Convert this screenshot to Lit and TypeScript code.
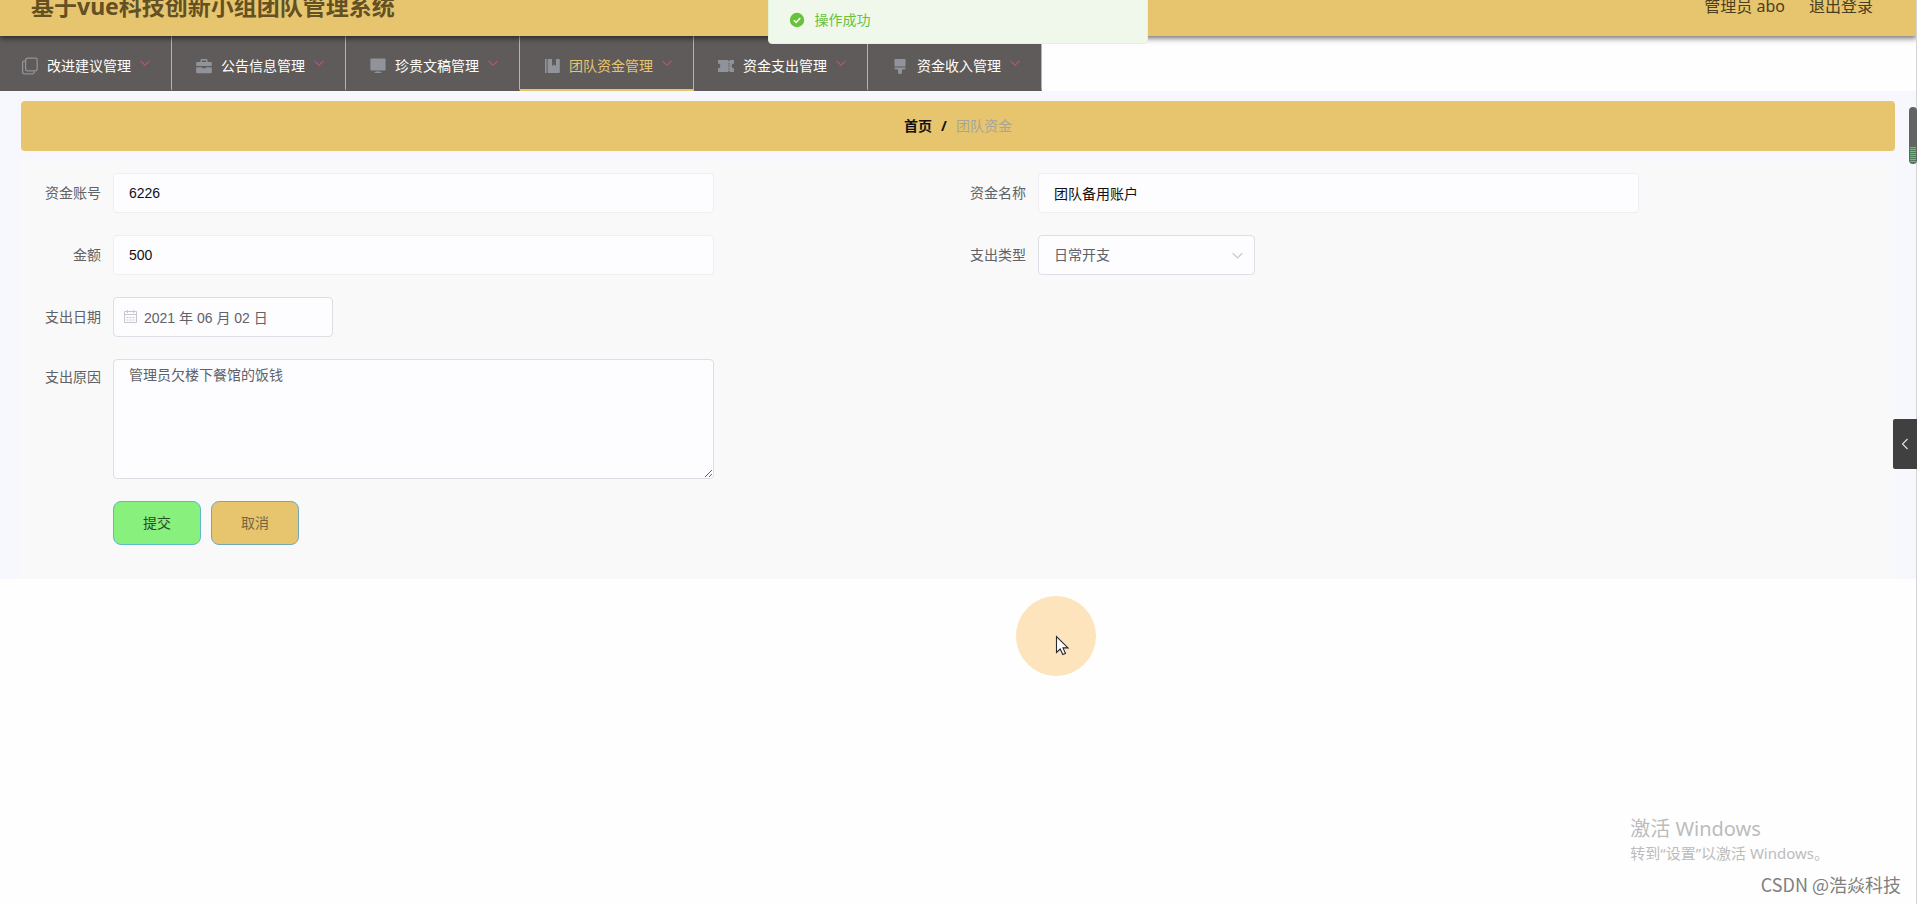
import { LitElement, html, css, svg, TemplateResult } from "lit";
import { customElement, state } from "lit/decorators.js";
import { classMap } from "lit/directives/class-map.js";

interface NavItem {
  label: string;
  icon: TemplateResult;
}

const copyIcon = svg`<g fill="none" stroke="currentColor" stroke-width="1.3"><rect x="4.6" y="1.2" width="11.6" height="12.6" rx="2"/><path d="M4.4 4.2H3.2a1.6 1.6 0 0 0-1.6 1.6v9.4a1.6 1.6 0 0 0 1.6 1.6h8.4a1.6 1.6 0 0 0 1.6-1.6v-1"/></g>`;
const caseIcon = svg`<path fill="currentColor" fill-rule="evenodd" d="M5.5 5V3a1 1 0 0 1 1-1h5a1 1 0 0 1 1 1v2H16a.8.8 0 0 1 .8.8V9H1.200V5.800A.8.8 0 0 1 2 5zM7 5h4V3.500H7zM1.200 10.200H7v1h4v-1h5.800V15.500a.8.8 0 0 1-.8.8H2a.8.8 0 0 1-.8-.8z"/>`;
const screenIcon = svg`<path fill="currentColor" d="M2.200 1.500h13.600a.8.8 0 0 1 .8.800v10.400a.8.8 0 0 1-.8.800H2.200a.8.8 0 0 1-.8-.800V2.300a.8.8 0 0 1 .8-.800zM7 14.500h4l2 1.600H5z"/>`;
const bookIcon = svg`<path fill="currentColor" d="M2 2h1.600v14H2zM4.600 2H9v7l2-1.500L13 9V2h3a.8.8 0 0 1 .8.800v12.400a.8.8 0 0 1-.8.800H4.600z"/>`;
const ticketIcon = svg`<path fill="currentColor" fill-rule="evenodd" d="M1 3h10l1 1.400L13 3h4v3.600a2.400 2.400 0 0 0 0 4.800V15h-4l-1-1.400L11 15H1v-3.600a2.400 2.400 0 0 0 0-4.800zM11.500 6v1.700h1V6zM11.500 8.500v1.600h1V8.500zM11.500 11v1.600h1V11z"/>`;
const brushIcon = svg`<path fill="currentColor" d="M3.500 2h11v7.500h-11zM3.500 10.500h11v.8a1.200 1.200 0 0 1-1.200 1.200H11v3a1.600 1.600 0 0 1-1.600 1.600h-.8A1.600 1.600 0 0 1 7 15.500v-3H4.700a1.200 1.200 0 0 1-1.200-1.200z"/>`;

const NAV: NavItem[] = [
  { label: "改进建议管理", icon: copyIcon },
  { label: "公告信息管理", icon: caseIcon },
  { label: "珍贵文稿管理", icon: screenIcon },
  { label: "团队资金管理", icon: bookIcon },
  { label: "资金支出管理", icon: ticketIcon },
  { label: "资金收入管理", icon: brushIcon },
];

@customElement("app-root")
export class AppRoot extends LitElement {
  @state() private active = 3;

  static styles = css`
    :host {
      display: block;
      position: relative;
      min-height: 100vh;
      overflow: hidden;
      background: #fefefe;
      color: #606266;
      font: 14px/20px "Noto Sans", "Noto Sans CJK SC", sans-serif;
    }
    *, *::before, *::after { box-sizing: border-box; }
    a { color: inherit; text-decoration: none; }
    button, input, select, textarea { font: inherit; color: inherit; margin: 0; }

    .header {
      position: relative;
      z-index: 1;
      display: flex;
      align-items: center;
      justify-content: space-between;
      height: 60px;
      margin-top: -24px;
      padding: 0 44px 0 31px;
      background: #e7c56f;
      box-shadow: 0 2px 6px rgba(0, 0, 0, 0.6);
      color: #4a3e20;
    }
    .title { margin: 0; font-size: 23px; line-height: 32px; font-weight: 700; color: #635023; }
    .account { display: flex; gap: 24px; font-size: 16px; line-height: 24px; }

    .nav { display: flex; height: 55px; }
    .nav-item {
      display: flex;
      align-items: center;
      height: 55px;
      padding: 6px 20px 0 20px;
      border: 0;
      border-right: 1px solid #b5b3b3;
      border-bottom: 2px solid #5e5b5a;
      background: #5e5b5a;
      color: #fff;
      cursor: pointer;
      white-space: nowrap;
    }
    .nav-item:first-child { padding-left: 18px; }
    .nav-item.active { color: #e7c56f; border-bottom-color: #e7c56f; }
    .nav-icon { width: 18px; height: 18px; margin: 0 8px 0 3px; color: #909399; }
    .nav-arrow { width: 12px; height: 12px; margin-left: 8px; margin-bottom: 5px; color: #c24f8c; }

    .main { padding: 10px 22px 0 21px; background: #f6f8fd; }
    .crumbs {
      display: flex;
      align-items: center;
      justify-content: center;
      gap: 9px;
      height: 50px;
      border-radius: 4px;
      background: #e7c56f;
      color: #a5a59c;
    }
    .crumbs .home, .crumbs .slash { font-weight: 700; color: #111; }

    .form {
      display: grid;
      grid-template-columns: 1fr 1fr;
      row-gap: 22px;
      margin-top: 10px;
      padding: 12px 12px 34px;
      background: #f9f9f9;
    }
    .field { display: flex; align-items: flex-start; }
    .field.start { grid-column: 1; }
    .label { flex: none; width: 80px; padding-right: 12px; text-align: right; line-height: 40px; }
    .label.area { line-height: 36px; }
    .control {
      display: block;
      width: 100%;
      height: 40px;
      padding: 0 15px;
      border: 1px solid #dcdfe6;
      border-radius: 4px;
      outline: 0;
      background: #fdfcff;
      font-family: "Liberation Sans", "Noto Sans CJK SC", sans-serif;
    }
    .wrap { position: relative; flex: 0 1 601px; }
    .wrap.date { flex-basis: 220px; }
    .wrap.pick { flex-basis: 217px; }
    .control.soft { border-color: #efeff2; color: #111; }
    .control.dated { padding-left: 30px; }
    select.control { appearance: none; }
    textarea.control { height: 120px; padding: 5px 15px; line-height: 21px; resize: vertical; }
    .calendar { position: absolute; left: 10px; top: 12px; width: 15px; height: 15px; color: #c4c7cf; pointer-events: none; }
    .caret { position: absolute; right: 11px; top: 14px; width: 13px; height: 13px; color: #c4c7cf; pointer-events: none; }

    .actions { grid-column: 1; display: flex; gap: 10px; padding-left: 80px; }
    .btn {
      width: 88px;
      height: 44px;
      padding: 0;
      border: 1px solid #72a9ba;
      border-radius: 8px;
      background: #e7c56f;
      color: #75653e;
      cursor: pointer;
    }
    .btn.primary { background: #88f07c; border-color: #5fb9cc; color: #2c4a2a; }

    .toast {
      position: absolute;
      z-index: 2;
      top: -4px;
      left: calc(50% - 191px);
      display: flex;
      align-items: center;
      gap: 10px;
      width: 380px;
      height: 48px;
      padding: 0 20px;
      border: 1px solid #e1f3d8;
      border-radius: 4px;
      background: #f0f7eb;
      color: #67c23a;
    }
    .toast svg { width: 16px; height: 16px; }

    .edge { position: absolute; z-index: 1; top: 0; right: 0; bottom: 0; width: 1px; background: #d5d5d8; }
    .thumb {
      position: absolute;
      z-index: 2;
      top: 107px;
      right: 0;
      display: flex;
      align-items: flex-end;
      width: 8px;
      height: 57px;
      padding: 1px;
      border-radius: 4px;
      background: #626463;
    }
    .level {
      width: 100%;
      height: 16px;
      border-radius: 0 0 3px 3px;
      background: repeating-linear-gradient(#5cc878 0 1px, #4b7d57 1px 2px);
    }
    .drawer {
      position: absolute;
      z-index: 2;
      top: 419px;
      right: 0;
      display: flex;
      align-items: center;
      justify-content: center;
      width: 24px;
      height: 50px;
      padding: 0;
      border: 0;
      border-radius: 2px 0 0 2px;
      background: #3f403f;
      color: #ddd;
    }
    .drawer svg { width: 8px; height: 12px; }
    .pointer { position: absolute; left: 1016px; top: 596px; width: 80px; height: 80px; }
    .activate { position: absolute; right: 88px; bottom: 40px; color: #bcbcbc; font-size: 15px; line-height: 22px; }
    .activate strong { display: block; font-size: 20px; line-height: 26px; font-weight: 400; }
    .credit { position: absolute; right: 16px; bottom: 7px; color: #808080; font-size: 18px; line-height: 26px; font-family: "Noto Sans CJK SC", sans-serif; }
  `;

  private chevron(cls: string) {
    return html`<svg class=${cls} viewBox="0 0 12 12" fill="none" stroke="currentColor" stroke-width="1.1" aria-hidden="true"><path d="M1.500 3.800 6 8.300l4.500-4.500" /></svg>`;
  }

  render() {
    return html`
      <header class="header">
        <h1 class="title">基于vue科技创新小组团队管理系统</h1>
        <div class="account"><span>管理员 abo</span><a href="#logout">退出登录</a></div>
      </header>

      <nav class="nav">
        ${NAV.map(
          (item, i) => html`<button
            type="button"
            class=${classMap({ "nav-item": true, active: i === this.active })}
            @click=${() => (this.active = i)}
          ><svg class="nav-icon" viewBox="0 0 18 18" aria-hidden="true">${item.icon}</svg><span>${item.label}</span>${this.chevron("nav-arrow")}</button>`
        )}
      </nav>

      <main class="main">
        <div class="crumbs"><a class="home" href="#home">首页</a><span class="slash">/</span><span>团队资金</span></div>
        <form class="form" @submit=${(e: Event) => e.preventDefault()}>
          <div class="field">
            <label class="label" for="account">资金账号</label>
            <div class="wrap"><input class="control soft" id="account" type="text" value="6226" /></div>
          </div>
          <div class="field">
            <label class="label" for="name">资金名称</label>
            <div class="wrap"><input class="control soft" id="name" type="text" value="团队备用账户" /></div>
          </div>
          <div class="field">
            <label class="label" for="amount">金额</label>
            <div class="wrap"><input class="control soft" id="amount" type="text" value="500" /></div>
          </div>
          <div class="field">
            <label class="label" for="kind">支出类型</label>
            <div class="wrap pick">
              <select class="control" id="kind"><option>日常开支</option></select>
              ${this.chevron("caret")}
            </div>
          </div>
          <div class="field start">
            <label class="label" for="date">支出日期</label>
            <div class="wrap date">
              <input class="control dated" id="date" type="text" value="2021 年 06 月 02 日" />
              <svg class="calendar" viewBox="0 0 15 15" fill="none" stroke="currentColor" aria-hidden="true">
                <path d="M1.500 2.500h12v11h-12zM1.500 5.500h12M4.500 1v3M10.500 1v3" />
                <path d="M3.500 8.500h2m1 0h2m1 0h2M3.500 11h2m1 0h2m1 0h2" />
              </svg>
            </div>
          </div>
          <div class="field start">
            <label class="label area" for="reason">支出原因</label>
            <div class="wrap"><textarea class="control" id="reason" .value=${"管理员欠楼下餐馆的饭钱"}></textarea></div>
          </div>
          <div class="actions">
            <button class="btn primary" type="submit">提交</button>
            <button class="btn" type="button">取消</button>
          </div>
        </form>
      </main>

      <div class="toast" role="status">
        <svg viewBox="0 0 16 16" aria-hidden="true"><circle cx="8" cy="8" r="7.200" fill="#67c23a" /><path d="M4.800 8.200 7.100 10.400l4.200-4.500" fill="none" stroke="#fff" stroke-width="1.500" /></svg>
        <span>操作成功</span>
      </div>

      <div class="edge"></div>
      <div class="thumb"><div class="level"></div></div>
      <button class="drawer" type="button" aria-label="展开"><svg viewBox="0 0 8 12" fill="none" stroke="currentColor" stroke-width="1.200"><path d="M6.500 1 1.500 6l5 5" /></svg></button>

      <svg class="pointer" viewBox="0 0 80 80" aria-hidden="true">
        <circle cx="40" cy="40" r="40" fill="#fde4bd" />
        <path d="M40.500 40.500v16l3.700-3.500 2.600 5.600 2.700-1.200-2.500-5.500h5z" fill="#fff" stroke="#2b2733" stroke-width="1.100" />
      </svg>

      <div class="activate"><strong>激活 Windows</strong>转到“设置”以激活 Windows。</div>
      <div class="credit">CSDN @浩焱科技</div>
    `;
  }
}
